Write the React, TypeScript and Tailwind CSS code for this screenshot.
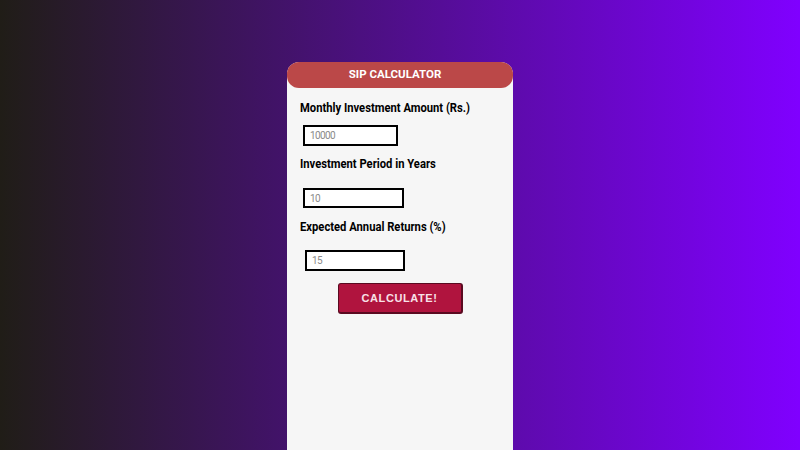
export default function App() {
  return (
    <div className="h-[450px] w-[800px] overflow-hidden bg-linear-to-r/srgb from-[#201d17] to-[#8000ff] font-['Roboto',sans-serif]">
      <div className="mx-auto mt-[62px] h-[400px] w-[226px] rounded-t-xl bg-[#f6f6f6]">
        <div className="flex h-[26px] items-center justify-center rounded-xl bg-[#bb4848] pr-[10px] text-[11.5px] font-bold text-white">
          SIP CALCULATOR
        </div>
        <div className="flex flex-col px-[13px]">
          <label className="mt-[12px] origin-left scale-x-[0.863] whitespace-nowrap text-[13px] font-bold leading-[15px] text-black">
            Monthly Investment Amount (Rs.)
          </label>
          <input
            className="mt-[10px] ml-[3px] h-[21px] w-[95px] border-2 border-black bg-white px-[5px] text-[10px] tracking-[-0.6px] text-gray-600 outline-none placeholder:text-[#8a8a8a]"
            placeholder="10000"
          />
          <label className="mt-[10px] origin-left scale-x-[0.863] whitespace-nowrap text-[13px] font-bold leading-[15px] text-black">
            Investment Period in Years
          </label>
          <input
            className="mt-[17px] ml-[3px] h-[20px] w-[101px] border-2 border-black bg-white px-[5px] text-[10px] tracking-[-0.6px] text-gray-600 outline-none placeholder:text-[#8a8a8a]"
            placeholder="10"
          />
          <label className="mt-[11px] origin-left scale-x-[0.863] whitespace-nowrap text-[13px] font-bold leading-[15px] text-black">
            Expected Annual Returns (%)
          </label>
          <input
            className="mt-[16px] ml-[5px] h-[21px] w-[100px] border-2 border-black bg-white px-[5px] text-[10px] tracking-[-0.6px] text-gray-600 outline-none placeholder:text-[#8a8a8a]"
            placeholder="15"
          />
          <button className="mx-auto mt-[12px] h-[31px] w-[125px] rounded-[3px] border border-[#5a0a20] border-b-2 border-r-2 bg-[#b0143e] font-['Liberation_Sans',sans-serif] text-[11px] font-bold tracking-[0.6px] text-[#f8e1e8]">
            CALCULATE!
          </button>
        </div>
      </div>
    </div>
  );
}
